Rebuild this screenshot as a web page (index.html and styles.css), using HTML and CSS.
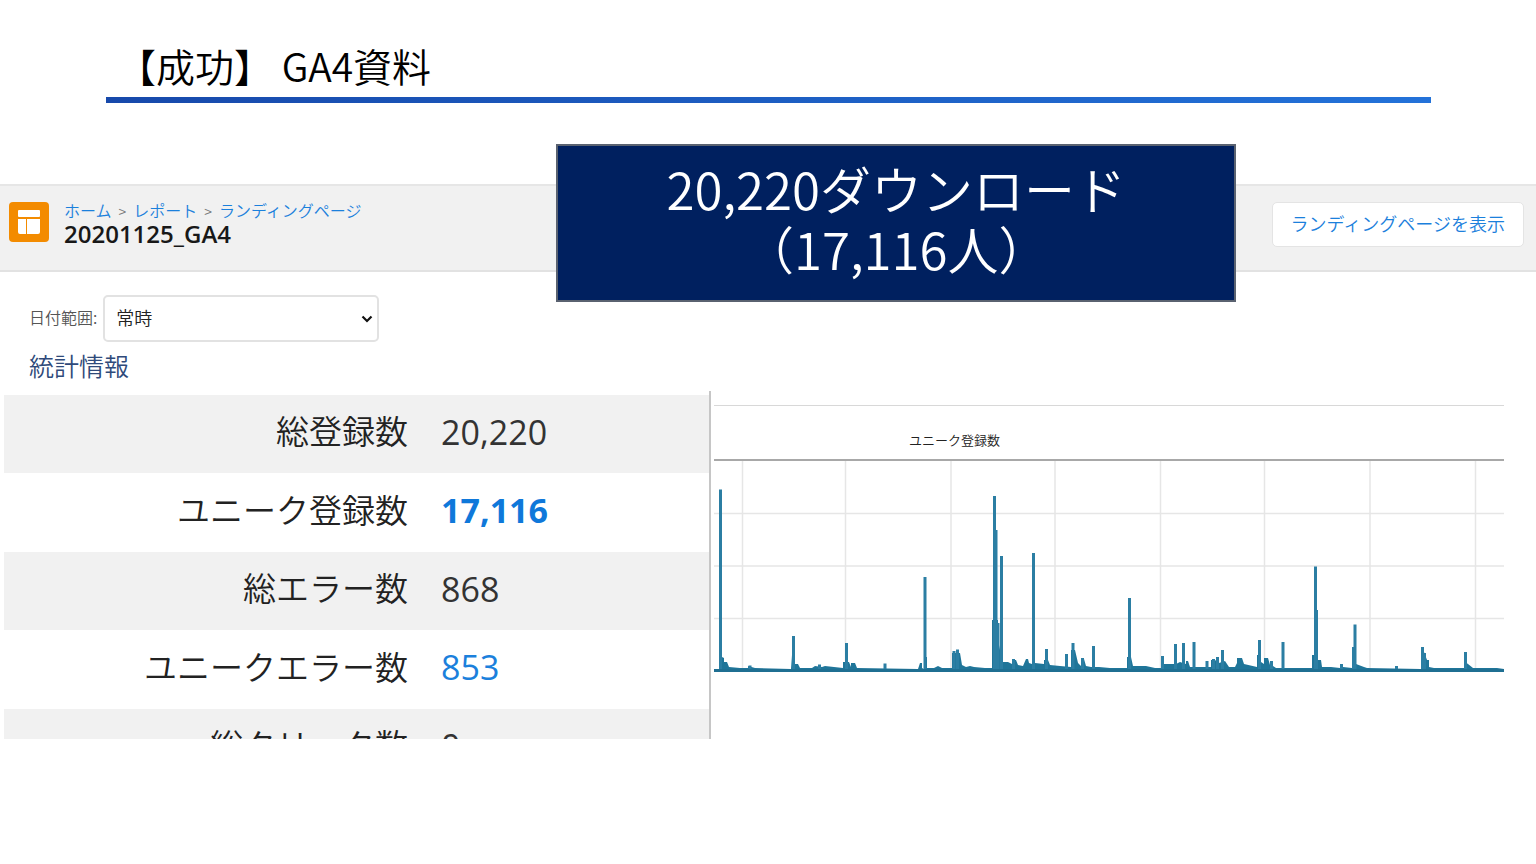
FILE: index.html
```
<!DOCTYPE html>
<html lang="ja">
<head>
<meta charset="utf-8">
<title>GA4資料</title>
<link rel="stylesheet" href="styles.css">
</head>
<body>
<header class="slide-head">
  <h1 class="slide-title">【成功】 GA4資料</h1>
</header>

<main class="report">
  <div class="page-bar">
    <svg class="page-icon" viewBox="0 0 40 40" aria-hidden="true">
      <rect width="40" height="40" rx="4" fill="#f38b00"/>
      <rect x="9" y="8" width="22" height="7" rx="1" fill="#fff"/>
      <path d="M9 17h8v15h-6a2 2 0 0 1-2-2zM18 17h13v13a2 2 0 0 1-2 2H18z" fill="#fff"/>
    </svg>
    <div class="page-name">
      <nav class="crumbs">
        <a href="#">ホーム</a><span class="sep">&gt;</span><a href="#">レポート</a><span class="sep">&gt;</span><a href="#">ランディングページ</a>
      </nav>
      <h2 class="record">20201125_GA4</h2>
    </div>
    <button class="view-button" type="button">ランディングページを表示</button>
    <p class="callout">20,220ダウンロード<br>（17,116人）</p>
  </div>

  <div class="filter">
    <label for="range">日付範囲:</label>
    <div class="select-wrap">
      <select id="range"><option>常時</option></select>
      <svg class="chevron" viewBox="0 0 12 8" aria-hidden="true"><path d="M1.500 1.500 6 6l4.500-4.500" fill="none" stroke="#111" stroke-width="2.200"/></svg>
    </div>
  </div>

  <h3 class="section-title">統計情報</h3>

  <div class="panels">
    <div class="stats-pane">
      <table class="stats">
        <tr><th scope="row">総登録数</th><td>20,220</td></tr>
        <tr><th scope="row">ユニーク登録数</th><td><a class="strong" href="#">17,116</a></td></tr>
        <tr><th scope="row">総エラー数</th><td>868</td></tr>
        <tr><th scope="row">ユニークエラー数</th><td><a href="#">853</a></td></tr>
        <tr><th scope="row">総クリック数</th><td>0</td></tr>
      </table>
    </div>
    <figure class="chart">
      <figcaption>ユニーク登録数</figcaption>
      <svg class="plot" viewBox="714 461 790 214" preserveAspectRatio="none" aria-hidden="true">
        <path d="M742.500 461V670M845.500 461V670M951 461V670M1055 461V670M1160.500 461V670M1264.500 461V670M1370 461V670M1475.500 461V670M714 513.500H1504M714 566H1504M714 618.500H1504" stroke="#e6e6e6" stroke-width="1.500" fill="none"/>
        <path d="M714 672V669.500L719 669V640H722V657L724 658V662H727L729 667L740 668L748 668V666L755 668L791 669L792 655H795V664H798L800 668L812 668L815 666L822 667L825 666L843 668V662H849L851 667V663H855L857 668L918 669L920 663H922V668L924 669V657H927V668L934 668L938 666L942 668L952 668V653H960L962 665L966 667L970 666L974 667L985 668L992 668V620H998V640L1000 650V640H1003V662H1008L1012 664V660H1016L1018 665L1023 666L1026 659H1028L1029 663L1032 664V650H1035V663L1044 664V660H1048L1050 665L1060 666L1071 667V650H1075L1078 663L1081 666V659H1084L1086 666L1091 667L1099 667L1110 668L1127 668V657H1131L1133 666L1146 666L1155 668L1161 668V658H1164V664L1172 664L1176 664L1180 662L1186 664V661H1188L1190 667L1206 667L1211 667V660H1215L1219 663L1225 661L1229 667L1235 667L1237 663V658H1242L1244 664L1257 667V655H1261V662L1264 664V658H1268L1270 665L1273 666L1276 668L1312 668V655H1318V660H1321L1322 667L1331 667L1340 668L1343 667L1352 668V648H1356V664L1364 667L1367 668L1421 669V652H1424L1427 660H1429V667L1434 668L1464 668V661L1468 664L1473 668L1497 668L1504 669V672Z" fill="#1f7599"/>
        <path d="M720.500 671V489.500M793.500 671V636M846.500 671V643M885 671V663.500M750 671V665.500M819.500 671V664.500M925 671V577M954 671V651M957.500 671V649.500M994.500 671V496M996 671V530M998 671V623M1001.500 671V556M1013.500 671V659M1033.500 671V553M1046.500 671V649M1066.500 671V654M1073 671V643M1082.500 671V658M1093.500 671V646M1129.500 671V598M1162.500 671V656M1175.500 671V644M1183.500 671V643M1194 671V642M1207 671V661M1213.500 671V659M1217.500 671V657M1222.500 671V650M1259.500 671V640M1271.500 671V661M1283 671V642M1315.500 671V566.500M1316.500 671V610M1341.500 671V664M1355 671V624.500M1353.500 671V647M1396.500 671V666M1422.500 671V647M1424.500 671V653M1465.500 671V652" stroke="#2b7ea3" stroke-width="3" fill="none"/>
        <path d="M714 670.500H1504" stroke="#1f6f92" stroke-width="3"/>
      </svg>
    </figure>
  </div>
</main>
</body>
</html>
```
FILE: styles.css
```
* {
  box-sizing: border-box;
}

body,
h1,
h2,
h3,
p,
figure {
  margin: 0;
}

body {
  background: #fff;
  color: #222;
  font-family: "Open Sans", "Noto Sans CJK JP", sans-serif;
  font-weight: 350;
}

a {
  color: #1b80dc;
  text-decoration: none;
}

.slide-head {
  margin: 0 105px 0 106px;
  padding: 36px 11px 0;
  border-bottom: 6px solid;
  border-image: linear-gradient(90deg, #1749ab, #2372d9) 1;
}

.slide-title {
  padding-bottom: 2px;
  color: #000;
  font-family: "Noto Sans CJK JP", sans-serif;
  font-size: 39px;
  font-weight: 350;
  line-height: 59px;
}

.report {
  padding-top: 81px;
}

.page-bar {
  position: relative;
  display: flex;
  align-items: flex-start;
  gap: 15px;
  min-height: 88px;
  padding: 16px 12px 0 9px;
  background: #f1f1f1;
  border-top: 2px solid #e6e6e6;
  border-bottom: 2px solid #e2e2e2;
}

.page-icon {
  width: 40px;
  height: 40px;
}

.page-name {
  flex: 1;
}

.crumbs {
  font-family: "Noto Sans CJK JP", sans-serif;
  font-size: 16px;
  line-height: 17px;
  white-space: nowrap;
}

.crumbs .sep {
  padding: 0 7px;
  color: #777;
  font-size: 14px;
}

.record {
  color: #181818;
  font-size: 24px;
  font-weight: 600;
  line-height: 28px;
}

.view-button {
  padding: 0 18px 4px;
  height: 45px;
  background: #fff;
  border: 1px solid #e4e4e4;
  border-radius: 5px;
  color: #1b80dc;
  font: 350 18px "Noto Sans CJK JP", sans-serif;
}

.callout {
  position: absolute;
  top: -42px;
  left: 36.2%;
  width: 44.3%;
  padding: 12px 0 22px;
  background: #00205f;
  border: 2px solid #5a6270;
  color: #fff;
  font: 350 51px/60px "Noto Sans CJK JP", sans-serif;
  text-align: center;
}

.filter {
  display: flex;
  align-items: center;
  gap: 6px;
  padding: 23px 29px 0;
  font-size: 16px;
}

.filter label {
  padding-bottom: 4px;
  color: #555;
  font-family: "Noto Sans CJK JP", sans-serif;
}

.select-wrap {
  position: relative;
  width: 276px;
}

.select-wrap select {
  width: 100%;
  height: 47px;
  padding: 0 11px 4px;
  appearance: none;
  background: #fff;
  border: 2px solid #e2e2e2;
  border-radius: 5px;
  color: #222;
  font: 350 18px "Noto Sans CJK JP", sans-serif;
}

.chevron {
  position: absolute;
  top: 20px;
  right: 6px;
  width: 12px;
  height: 8px;
  pointer-events: none;
}

.section-title {
  padding: 5px 29px 8px;
  color: #2f4a7a;
  font-family: "Noto Sans CJK JP", sans-serif;
  font-size: 25px;
  font-weight: 350;
  line-height: 36px;
}

.panels {
  display: grid;
  grid-template-columns: 707fr 790fr;
  gap: 3px;
  max-height: 348px;
  margin: 0 32px 0 4px;
  overflow: hidden;
}

.stats-pane {
  padding-top: 4px;
  border-right: 2px solid #c6c6c6;
}

.stats {
  width: 100%;
  border-collapse: collapse;
  font-size: 34px;
}

.stats tr {
  height: 78px;
}

.stats tr:nth-child(even) {
  height: 79px;
}

.stats tr:nth-child(odd) {
  background: #f1f1f1;
}

.stats th,
.stats td {
  padding: 0 0 5px;
  line-height: 48px;
  text-align: left;
}

.stats th {
  width: 62%;
  padding: 0 33px 8px 0;
  font-family: "Noto Sans CJK JP", sans-serif;
  font-size: 33px;
  font-weight: 350;
  text-align: right;
}

.stats td {
  color: #333;
  font-weight: 400;
}

.stats .strong {
  color: #0f78da;
  font-weight: 700;
}

.chart {
  margin-top: 14px;
  border-top: 1px solid #d8d8d8;
}

.chart figcaption {
  padding: 24px 0 9px 195px;
  border-bottom: 2px solid #a8a8a8;
  font: 350 13px/20px "Noto Sans CJK JP", sans-serif;
}

.plot {
  display: block;
  width: 100%;
  height: 214px;
}
```
